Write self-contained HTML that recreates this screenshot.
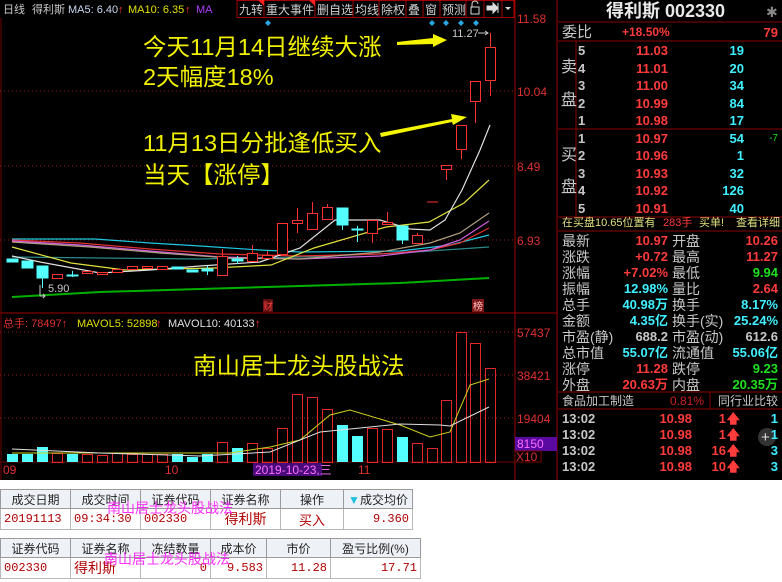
<!DOCTYPE html>
<html><head><meta charset="utf-8"><style>
*{margin:0;padding:0;box-sizing:border-box}
body{width:782px;height:582px;background:#fff;position:relative;overflow:hidden;font-family:"Liberation Sans","Noto Sans CJK SC",sans-serif}
#top{position:absolute;left:0;top:0;width:782px;height:480px;background:#000}
svg{position:absolute;left:0;top:0}
.p{position:absolute;white-space:nowrap;line-height:1}
.r{color:#ff3b3b}.c{color:#3ff0ff}.g{color:#1ee01e}.w{color:#c8c8c8}.y{color:#e8e860}
.lb{font-size:14px;color:#c8c8c8}
.num{font-size:13px;font-weight:bold}
table{position:absolute;border-collapse:collapse;font-size:12px}
td{border:1px solid #b8b8b8;height:18px;text-align:center;padding:0 3px}
th{border:1px solid #9a9a9a;background:#eef1f6;font-weight:normal;height:19px;color:#222}
td{color:#b00000;font-family:"Liberation Mono","Noto Sans CJK SC",monospace}
.wm{position:absolute;color:#ff30ff;font-size:14px;white-space:nowrap}
</style></head><body>
<div id="top">
<svg width="782" height="480" viewBox="0 0 782 480" font-family="Liberation Sans, Noto Sans CJK SC, sans-serif">
<line x1="515" y1="0" x2="515" y2="480" stroke="#a00000"/>
<line x1="557" y1="0" x2="557" y2="480" stroke="#a00000"/>
<line x1="0" y1="313" x2="557" y2="313" stroke="#a00000"/>
<line x1="0" y1="462" x2="515" y2="462" stroke="#700000"/>
<line x1="1" y1="18" x2="1" y2="480" stroke="#700000"/>
<g stroke="#902020" stroke-dasharray="1,3">
<line x1="0" y1="91" x2="515" y2="91"/><line x1="0" y1="166" x2="515" y2="166"/><line x1="0" y1="240" x2="515" y2="240"/>
<line x1="0" y1="332" x2="515" y2="332"/><line x1="0" y1="375" x2="515" y2="375"/><line x1="0" y1="418" x2="515" y2="418"/>
</g>
<text x="3" y="13" font-size="11" fill="#c8c8c8">日线</text>
<text x="32" y="13" font-size="11" fill="#c8c8c8">得利斯</text>
<text x="68" y="13" font-size="11" fill="#c8d8f0">MA5: 6.40</text><text x="118" y="13" font-size="11" fill="#ff3030">↑</text>
<text x="128" y="13" font-size="11" fill="#e0e000">MA10: 6.35</text><text x="185" y="13" font-size="11" fill="#ff3030">↑</text>
<text x="196" y="13" font-size="11" fill="#b040ff">MA</text>
<g stroke="#a00000" fill="none">
<rect x="237" y="0.5" width="27" height="17"/><rect x="264" y="0.5" width="51" height="17"/><rect x="315" y="0.5" width="38" height="17"/>
<rect x="353" y="0.5" width="26" height="17"/><rect x="379" y="0.5" width="27" height="17"/><rect x="406" y="0.5" width="17" height="17"/>
<rect x="423" y="0.5" width="17" height="17"/><rect x="440" y="0.5" width="26" height="17"/><rect x="466" y="0.5" width="18" height="17"/>
<rect x="484" y="0.5" width="18" height="17"/><rect x="502" y="0.5" width="12" height="17"/>
</g>
<polygon points="258,0 264,0 264,6" fill="#ff2020"/><polygon points="309,0 315,0 315,6" fill="#ff2020"/>
<g font-size="12" fill="#d0d0d0">
<text x="239" y="14">九转</text><text x="266" y="14">重大事件</text><text x="317" y="14">删自选</text><text x="355" y="14">均线</text>
<text x="381" y="14">除权</text><text x="408" y="14">叠</text><text x="425" y="14">窗</text><text x="442" y="14">预测</text>
</g>
<rect x="471" y="7" width="8" height="7" fill="none" stroke="#ddd"/><path d="M472,7 V4 a3,3 0 0 1 6,0" fill="none" stroke="#ddd"/>
<path d="M487,6 h6 v-3 l5,5 -5,5 v-3 h-6z M498,3 v10" fill="#ddd" stroke="#ddd"/>
<polygon points="505,7 511,7 508,10" fill="#ddd"/>
<g fill="#2aa6e0"><path d="M268,20 l3,3 -3,3 -3,-3z"/><path d="M432,20 l3,3 -3,3 -3,-3z"/><path d="M446,20 l3,3 -3,3 -3,-3z"/><path d="M461,20 l3,3 -3,3 -3,-3z"/><path d="M476,20 l3,3 -3,3 -3,-3z"/></g>
<g font-size="12" fill="#e03030">
<text x="517" y="23">11.58</text><text x="517" y="96">10.04</text><text x="517" y="171">8.49</text><text x="517" y="245">6.93</text>
<text x="517" y="337">57437</text><text x="517" y="380">38421</text><text x="517" y="423">19404</text>
</g>
<rect x="515" y="437" width="42" height="14" fill="#5a0aa0"/>
<text x="517" y="448" font-size="12" fill="#ff70ff">8150</text>
<rect x="515" y="451" width="26" height="11" fill="none" stroke="#800000"/>
<text x="516" y="461" font-size="12" fill="#e03030">X10</text>
<g fill="none" stroke-width="1.2">
<polyline stroke="#00b000" stroke-width="2" points="12,297 100,292 200,289 300,286 400,283 489,278"/>
<polyline stroke="#2a8a8a" points="12,257 100,258 200,259 300,257 400,253 489,247"/>
<polyline stroke="#20c8e0" points="12,239 95,239 150,243 200,246 260,250 300,252 400,251 450,245 489,235"/>
<polyline stroke="#e03030" points="12,240 80,243 150,249 220,254 300,256 380,254 430,250 460,243 489,228"/>
<polyline stroke="#d060e0" points="12,241 80,245 150,251 220,257 300,259 380,256 430,250 460,240 489,221"/>
<polyline stroke="#b0a080" points="12,242 90,247 160,253 230,258 300,259 380,252 430,243 460,233 489,213"/>
<polyline stroke="#e0e040" points="12,247 71,263 125,270 214,268 271,265 314,248 386,227 429,222 464,203 489,180"/>
<polyline stroke="#e0e0e0" points="12,256 40,262 100,273 150,270 200,266 260,262 300,248 335,220 380,220 410,229 430,230 445,220 462,190 480,150 490,125"/>
</g>
<g fill="#54ffff" stroke="#54ffff">
<rect x="7" y="259" width="11" height="3"/><rect x="22" y="261" width="11" height="7"/>
<line x1="42.5" y1="266" x2="42.5" y2="288"/><rect x="37" y="266" width="11" height="12"/>
<line x1="72.5" y1="271" x2="72.5" y2="277"/><rect x="67" y="275" width="11" height="1"/>
<rect x="172" y="267" width="11" height="2"/><rect x="187" y="270" width="11" height="2"/>
<line x1="207.5" y1="266" x2="207.5" y2="275"/><rect x="202" y="269" width="11" height="2"/>
<line x1="237.5" y1="256" x2="237.5" y2="264"/><rect x="232" y="259" width="11" height="2"/>
<line x1="342.5" y1="208" x2="342.5" y2="230"/><rect x="337" y="208" width="11" height="17"/>
<line x1="357.5" y1="226" x2="357.5" y2="242"/><rect x="352" y="229" width="11" height="1"/>
<line x1="402.5" y1="226" x2="402.5" y2="244"/><rect x="397" y="226" width="11" height="14"/>
</g>
<g fill="#000" stroke="#ff3232">
<rect x="52.5" y="274.5" width="10" height="4"/><rect x="82.5" y="271.5" width="10" height="2"/><rect x="97.5" y="272.5" width="10" height="2"/>
<rect x="112.5" y="269.5" width="10" height="3"/><rect x="127.5" y="266.5" width="10" height="3"/><rect x="142.5" y="266.5" width="10" height="2"/>
<rect x="157.5" y="266.5" width="10" height="3"/>
<line x1="222.5" y1="249" x2="222.5" y2="256"/><rect x="217.5" y="256.5" width="10" height="19"/>
<line x1="252.5" y1="245" x2="252.5" y2="253"/><rect x="247.5" y="253.5" width="10" height="8"/>
<line x1="267.5" y1="251" x2="267.5" y2="255"/><rect x="262.5" y="255.5" width="10" height="3"/>
<rect x="277.5" y="223.5" width="10" height="31"/>
<line x1="297.5" y1="208" x2="297.5" y2="233"/><rect x="292.5" y="220.5" width="10" height="3"/>
<line x1="312.5" y1="202" x2="312.5" y2="213"/><rect x="307.5" y="213.5" width="10" height="16"/>
<line x1="327.5" y1="204" x2="327.5" y2="207"/><rect x="322.5" y="207.5" width="10" height="12"/>
<line x1="372.5" y1="233" x2="372.5" y2="243"/><rect x="367.5" y="220.5" width="10" height="13"/>
<line x1="387.5" y1="212" x2="387.5" y2="222"/><rect x="382.5" y="222.5" width="10" height="2"/>
<line x1="417.5" y1="233" x2="417.5" y2="235"/><rect x="412.5" y="235.5" width="10" height="8"/>
<line x1="427" y1="202" x2="438" y2="202"/>
<line x1="446.5" y1="169" x2="446.5" y2="180"/><rect x="441.5" y="165.5" width="10" height="4"/>
<line x1="461.5" y1="149" x2="461.5" y2="159"/><rect x="456.5" y="125.5" width="10" height="24"/>
<line x1="475.5" y1="101" x2="475.5" y2="123"/><rect x="470.5" y="81.5" width="10" height="20"/>
<line x1="490.5" y1="33" x2="490.5" y2="47"/><line x1="490.5" y1="80" x2="490.5" y2="96"/><rect x="485.5" y="47.5" width="10" height="33"/>
</g>
<text x="452" y="37" font-size="11" fill="#c8c8c8">11.27</text><path d="M478,33 h10 M485,31 l3,2 -3,2" stroke="#c8c8c8" fill="none"/>
<path d="M40,285 v11 h5 M43,294 l2,2 -2,2" stroke="#c8c8c8" fill="none"/><text x="48" y="292" font-size="11" fill="#c8c8c8">5.90</text>
<rect x="263" y="299" width="10" height="13" fill="#5a1010"/><text x="263" y="310" font-size="10" fill="#ff4040">财</text>
<rect x="472" y="299" width="12" height="13" fill="#7a1818"/><text x="473" y="310" font-size="10" fill="#ffc0c0">榜</text>
<g fill="#f0f000" font-size="23.5">
<text x="143" y="55">今天11月14日继续大涨</text>
<text x="143" y="85">2天幅度18%</text>
<text x="143" y="151">11月13日分批逢低买入</text>
<text x="143" y="183">当天【涨停】</text>
<text x="193" y="374">南山居士龙头股战法</text>
</g>
<polygon points="397,42 433,38 433,34 447,40 433,47 433,44 397,45" fill="#f5f500"/>
<polygon points="380,133 452,119 451,114 467,117 453,125 452,122 381,137" fill="#f5f500"/>
<text x="3" y="327" font-size="11" fill="#e03030">总手: 78497↑</text>
<text x="77" y="327" font-size="11" fill="#e0e000">MAVOL5: 52898</text><text x="156" y="327" font-size="11" fill="#ff3030">↑</text>
<text x="168" y="327" font-size="11" fill="#e0e0e0">MAVOL10: 40133</text><text x="255" y="327" font-size="11" fill="#ff3030">↑</text>
<g fill="#54ffff">
<rect x="7" y="454" width="11" height="8"/><rect x="22" y="454" width="11" height="8"/><rect x="37" y="447" width="11" height="15"/>
<rect x="67" y="454" width="11" height="8"/><rect x="172" y="454" width="11" height="8"/><rect x="187" y="457" width="11" height="5"/>
<rect x="202" y="454" width="11" height="8"/><rect x="232" y="448" width="11" height="14"/><rect x="337" y="425" width="11" height="37"/>
<rect x="352" y="436" width="11" height="26"/><rect x="397" y="437" width="11" height="25"/>
</g>
<g fill="none" stroke="#e02828">
<rect x="52.5" y="453.5" width="10" height="9"/><rect x="82.5" y="454.5" width="10" height="8"/><rect x="97.5" y="455.5" width="10" height="7"/>
<rect x="112.5" y="453.5" width="10" height="9"/><rect x="127.5" y="454.5" width="10" height="8"/><rect x="142.5" y="454.5" width="10" height="8"/>
<rect x="157.5" y="454.5" width="10" height="8"/><rect x="217.5" y="442.5" width="10" height="20"/><rect x="247.5" y="443.5" width="10" height="19"/>
<rect x="262.5" y="448.5" width="10" height="14"/><rect x="277.5" y="428.5" width="10" height="34"/><rect x="292.5" y="394.5" width="10" height="68"/>
<rect x="307.5" y="397.5" width="10" height="65"/><rect x="322.5" y="409.5" width="10" height="53"/><rect x="367.5" y="428.5" width="10" height="34"/>
<rect x="382.5" y="429.5" width="10" height="33"/><rect x="412.5" y="443.5" width="10" height="19"/><rect x="427.5" y="448.5" width="10" height="14"/>
<rect x="441.5" y="400.5" width="10" height="62"/><rect x="456.5" y="332.5" width="10" height="130"/><rect x="470.5" y="343.5" width="10" height="119"/>
<rect x="485.5" y="368.5" width="10" height="94"/>
</g>
<polyline fill="none" stroke="#d0d020" points="12,453 230,453 270,447 300,440 330,415 350,410 400,425 430,437 450,432 470,385 489,379"/>
<polyline fill="none" stroke="#e0e0e0" points="12,449 100,453 200,456 270,452 320,432 360,428 400,424 440,425 450,426 489,407"/>
<g font-size="12" fill="#e03030"><text x="3" y="474">09</text><text x="165" y="474">10</text><text x="358" y="474">11</text></g>
<rect x="253" y="463" width="69" height="13" fill="#4b0a7a"/><text x="255" y="474" font-size="12" fill="#ff70ff">2019-10-23,三</text>
<g stroke="#8a0000">
<line x1="558" y1="22" x2="782" y2="22"/><line x1="558" y1="41" x2="782" y2="41"/><line x1="558" y1="129" x2="782" y2="129"/>
<line x1="558" y1="217" x2="782" y2="217"/><line x1="558" y1="231" x2="782" y2="231"/><line x1="576" y1="41" x2="576" y2="217"/>
<line x1="558" y1="392" x2="782" y2="392"/><line x1="558" y1="409" x2="782" y2="409"/><line x1="710" y1="392" x2="710" y2="409"/>
</g>
<circle cx="767" cy="437" r="9" fill="#333"/><text x="761" y="442" font-size="15" fill="#ddd">+</text>
</svg>

<div class="p" style="left:606px;top:2px;font-size:18px;font-weight:bold;color:#e8e8e8">得利斯 002330</div>
<div class="p" style="left:766px;top:5px;font-size:14px;color:#888">✱</div>
<div class="p lb" style="left:562px;top:25px;font-size:15px">委比</div>
<div class="p r num" style="left:622px;top:26px;font-size:12px">+18.50%</div>
<div class="p r num" style="right:4px;top:26px">79</div>
<div class="p lb" style="left:561px;top:60px;font-size:16px">卖</div><div class="p lb" style="left:561px;top:93px;font-size:16px">盘</div>
<div class="p lb" style="left:561px;top:148px;font-size:16px">买</div><div class="p lb" style="left:561px;top:180px;font-size:16px">盘</div>

<div style="position:absolute;left:578px;top:42px;width:204px;font-size:13px;font-weight:bold;line-height:17.5px">
<div style="position:relative;height:17.5px"><span class="w" style="position:absolute;left:0">5</span><span class="r" style="position:absolute;right:114px">11.03</span><span class="c" style="position:absolute;right:38px">19</span></div>
<div style="position:relative;height:17.5px"><span class="w" style="position:absolute;left:0">4</span><span class="r" style="position:absolute;right:114px">11.01</span><span class="c" style="position:absolute;right:38px">20</span></div>
<div style="position:relative;height:17.5px"><span class="w" style="position:absolute;left:0">3</span><span class="r" style="position:absolute;right:114px">11.00</span><span class="c" style="position:absolute;right:38px">34</span></div>
<div style="position:relative;height:17.5px"><span class="w" style="position:absolute;left:0">2</span><span class="r" style="position:absolute;right:114px">10.99</span><span class="c" style="position:absolute;right:38px">84</span></div>
<div style="position:relative;height:17.5px"><span class="w" style="position:absolute;left:0">1</span><span class="r" style="position:absolute;right:114px">10.98</span><span class="c" style="position:absolute;right:38px">17</span></div>
<div style="position:relative;height:17.5px"><span class="w" style="position:absolute;left:0">1</span><span class="r" style="position:absolute;right:114px">10.97</span><span class="c" style="position:absolute;right:38px">54</span><span class="g" style="position:absolute;right:4px;font-size:10px;font-weight:normal">-7</span></div>
<div style="position:relative;height:17.5px"><span class="w" style="position:absolute;left:0">2</span><span class="r" style="position:absolute;right:114px">10.96</span><span class="c" style="position:absolute;right:38px">1</span></div>
<div style="position:relative;height:17.5px"><span class="w" style="position:absolute;left:0">3</span><span class="r" style="position:absolute;right:114px">10.93</span><span class="c" style="position:absolute;right:38px">32</span></div>
<div style="position:relative;height:17.5px"><span class="w" style="position:absolute;left:0">4</span><span class="r" style="position:absolute;right:114px">10.92</span><span class="c" style="position:absolute;right:38px">126</span></div>
<div style="position:relative;height:17.5px"><span class="w" style="position:absolute;left:0">5</span><span class="r" style="position:absolute;right:114px">10.91</span><span class="c" style="position:absolute;right:38px">40</span></div>
</div>
<div class="p" style="left:562px;top:218px;font-size:11px;color:#e0e080">在买盘10.65位置有</div>
<div class="p r" style="left:663px;top:218px;font-size:11px">283手</div>
<div class="p" style="left:699px;top:218px;font-size:11px;color:#e0e080">买单!</div>
<div class="p" style="left:736px;top:218px;font-size:11px;color:#e0e080">查看详细</div>

<div style="position:absolute;left:562px;top:233px;width:216px;line-height:16px">
<div style="position:relative;height:16px"><span class="lb" style="position:absolute;left:0">最新</span><span class="r num" style="position:absolute;right:110px">10.97</span><span class="lb" style="position:absolute;left:110px">开盘</span><span class="r num" style="position:absolute;right:0">10.26</span></div>
<div style="position:relative;height:16px"><span class="lb" style="position:absolute;left:0">涨跌</span><span class="r num" style="position:absolute;right:110px">+0.72</span><span class="lb" style="position:absolute;left:110px">最高</span><span class="r num" style="position:absolute;right:0">11.27</span></div>
<div style="position:relative;height:16px"><span class="lb" style="position:absolute;left:0">涨幅</span><span class="r num" style="position:absolute;right:110px">+7.02%</span><span class="lb" style="position:absolute;left:110px">最低</span><span class="g num" style="position:absolute;right:0">9.94</span></div>
<div style="position:relative;height:16px"><span class="lb" style="position:absolute;left:0">振幅</span><span class="c num" style="position:absolute;right:110px">12.98%</span><span class="lb" style="position:absolute;left:110px">量比</span><span class="r num" style="position:absolute;right:0">2.64</span></div>
<div style="position:relative;height:16px"><span class="lb" style="position:absolute;left:0">总手</span><span class="c num" style="position:absolute;right:110px">40.98万</span><span class="lb" style="position:absolute;left:110px">换手</span><span class="c num" style="position:absolute;right:0">8.17%</span></div>
<div style="position:relative;height:16px"><span class="lb" style="position:absolute;left:0">金额</span><span class="c num" style="position:absolute;right:110px">4.35亿</span><span class="lb" style="position:absolute;left:110px">换手(实)</span><span class="c num" style="position:absolute;right:0">25.24%</span></div>
<div style="position:relative;height:16px"><span class="lb" style="position:absolute;left:0">市盈(静)</span><span class="w num" style="position:absolute;right:110px">688.2</span><span class="lb" style="position:absolute;left:110px">市盈(动)</span><span class="w num" style="position:absolute;right:0">612.6</span></div>
<div style="position:relative;height:16px"><span class="lb" style="position:absolute;left:0">总市值</span><span class="c num" style="position:absolute;right:110px">55.07亿</span><span class="lb" style="position:absolute;left:110px">流通值</span><span class="c num" style="position:absolute;right:0">55.06亿</span></div>
<div style="position:relative;height:16px"><span class="lb" style="position:absolute;left:0">涨停</span><span class="r num" style="position:absolute;right:110px">11.28</span><span class="lb" style="position:absolute;left:110px">跌停</span><span class="g num" style="position:absolute;right:0">9.23</span></div>
<div style="position:relative;height:16px"><span class="lb" style="position:absolute;left:0">外盘</span><span class="r num" style="position:absolute;right:110px">20.63万</span><span class="lb" style="position:absolute;left:110px">内盘</span><span class="g num" style="position:absolute;right:0">20.35万</span></div>
</div>
<div class="p" style="left:562px;top:395px;font-size:12px;color:#c8c8c8">食品加工制造</div>
<div class="p" style="right:78px;top:395px;font-size:12px;color:#d02020">0.81%</div>
<div class="p" style="left:718px;top:395px;font-size:12px;color:#c8c8c8">同行业比较</div>
<div style="position:absolute;left:562px;top:411px;width:216px;font-size:13px;font-weight:bold;line-height:16px">
<div style="position:relative;height:16px"><span class="w" style="position:absolute;left:0">13:02</span><span class="r" style="position:absolute;right:86px">10.98</span><span class="r" style="position:absolute;right:52px">1</span><span class="r" style="position:absolute;right:38px">🡅</span><span class="c" style="position:absolute;right:0">1</span></div>
<div style="position:relative;height:16px"><span class="w" style="position:absolute;left:0">13:02</span><span class="r" style="position:absolute;right:86px">10.98</span><span class="r" style="position:absolute;right:52px">1</span><span class="r" style="position:absolute;right:38px">🡅</span><span class="c" style="position:absolute;right:0">1</span></div>
<div style="position:relative;height:16px"><span class="w" style="position:absolute;left:0">13:02</span><span class="r" style="position:absolute;right:86px">10.98</span><span class="r" style="position:absolute;right:52px">16</span><span class="r" style="position:absolute;right:38px">🡅</span><span class="c" style="position:absolute;right:0">3</span></div>
<div style="position:relative;height:16px"><span class="w" style="position:absolute;left:0">13:02</span><span class="r" style="position:absolute;right:86px">10.98</span><span class="r" style="position:absolute;right:52px">10</span><span class="r" style="position:absolute;right:38px">🡅</span><span class="c" style="position:absolute;right:0">3</span></div>
</div>
</div>

<table style="left:0;top:489px;width:413px">
<tr><th style="width:70px">成交日期</th><th style="width:70px">成交时间</th><th style="width:70px">证券代码</th><th style="width:70px">证券名称</th><th style="width:63px">操作</th><th><span style="color:#20c0e0">▼</span>成交均价</th></tr>
<tr><td style="text-align:left">20191113</td><td style="text-align:left">09:34:30</td><td style="text-align:left">002330</td><td style="font-size:14px">得利斯</td><td style="font-size:13px">买入</td><td style="text-align:right">9.360</td></tr>
</table>
<table style="left:0;top:538px;width:421px">
<tr><th style="width:70px">证券代码</th><th style="width:70px">证券名称</th><th style="width:70px">冻结数量</th><th style="width:56px">成本价</th><th style="width:64px">市价</th><th>盈亏比例(%)</th></tr>
<tr><td style="text-align:left">002330</td><td style="font-size:14px;text-align:left">得利斯</td><td style="text-align:right">0</td><td style="text-align:right">9.583</td><td style="text-align:right">11.28</td><td style="text-align:right">17.71</td></tr>
</table>
<div class="wm" style="left:107px;top:498px">南山居士龙头股战法</div>
<div class="wm" style="left:104px;top:549px">南山居士龙头股战法</div>
</body></html>
